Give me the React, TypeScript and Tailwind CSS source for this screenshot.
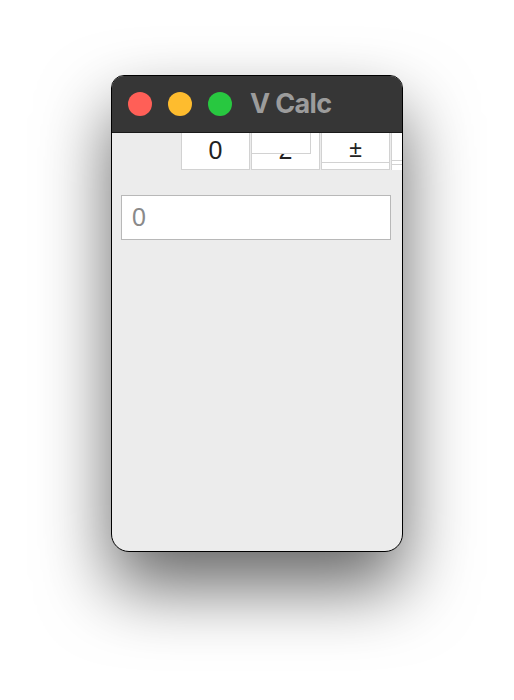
import React from 'react';

const App: React.FC = () => {
    return (
        <div className="min-h-screen bg-white flex justify-center pt-[75px]" style={{ fontFamily: '"Liberation Sans", Arial, sans-serif' }}>
            <div className="w-[292px] h-[477px] bg-[#ececec] border border-black rounded-t-[13px] rounded-b-[18px] overflow-hidden flex flex-col shadow-[0_35px_70px_rgba(0,0,0,0.6)]">
                {/* title bar */}
                <div className="h-[57px] shrink-0 bg-[#363636] border-b border-[#1a1a1a] flex items-center pl-[16px]">
                    <div className="flex items-center gap-[16px]">
                        <span className="w-[24px] h-[24px] rounded-full bg-[#ff5f57]" />
                        <span className="w-[24px] h-[24px] rounded-full bg-[#febc2e]" />
                        <span className="w-[24px] h-[24px] rounded-full bg-[#28c840]" />
                    </div>
                    <span className="ml-[18px] text-[27px] font-bold text-[#9c9c9c] tracking-tight" style={{ fontFamily: 'Inter, "Liberation Sans", sans-serif' }}>
                        V Calc
                    </span>
                </div>

                {/* key row, clipped under the title bar */}
                <div className="flex gap-[1px] pl-[69px] h-[37px] shrink-0">
                    <div className="w-[69px] shrink-0 bg-white border-x border-b border-[#d2d2d2] flex items-end justify-center pb-[6px] text-[25px] leading-none text-[#222]">
                        0
                    </div>
                    <div className="relative w-[69px] shrink-0 bg-white border-x border-b border-[#d2d2d2] flex items-end justify-center pb-[6px] text-[25px] leading-none text-[#222]">
                        2
                        <div className="absolute top-0 left-0 w-[59px] h-[21px] bg-white border-r border-b border-[#d2d2d2]" />
                    </div>
                    <div className="relative w-[69px] shrink-0 bg-white border-x border-b border-[#d2d2d2] flex items-end justify-center pb-[8px] text-[23px] leading-none text-[#222]">
                        ±
                        <div className="absolute left-0 right-0 top-[29px] border-b border-[#d2d2d2]" />
                    </div>
                    <div className="relative w-[69px] shrink-0 bg-white border-x border-[#d2d2d2]">
                        <div className="absolute left-0 right-0 top-[27px] border-b border-[#d2d2d2]" />
                        <div className="absolute left-0 right-0 top-[31px] border-b border-[#d2d2d2]" />
                    </div>
                </div>

                {/* display */}
                <div className="pl-[9px] pr-[11px] pt-[25px]">
                    <div className="h-[45px] bg-white border border-[#b8b8b8] flex items-center pl-[10px] text-[25px] text-[#8a8a8a]">
                        0
                    </div>
                </div>
            </div>
        </div>
    );
};

export default App;
